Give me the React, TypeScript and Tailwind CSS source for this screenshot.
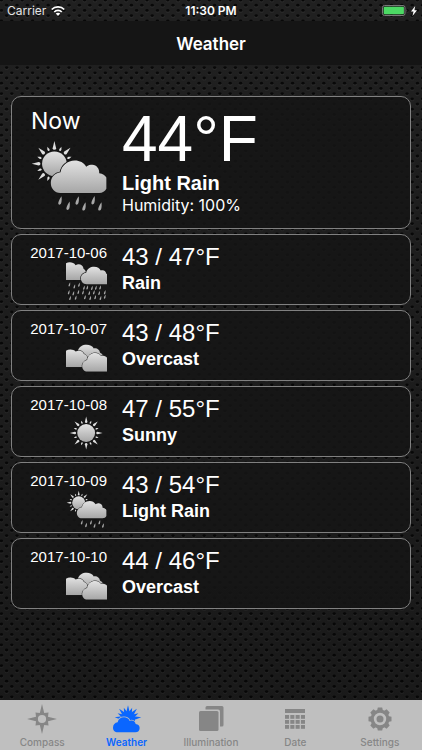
import { useId } from "react";
import type { ReactNode } from "react";

function MeshBackground() {
  const dots: ReactNode[] = [];
  for (let row = 0; row <= 10; row++) {
    for (let col = 0; col <= 5; col++) {
      const x = 1.4 + (col - (row % 2 ? 1 : 0)) * 10.4 + (row % 2 ? 5.2 : 0);
      const y = row * 5.2;
      dots.push(
        <g key={`${row}-${col}`}>
          <ellipse cx={x} cy={y + 1} rx="2" ry="1.5" fill="#292929" />
          <ellipse cx={x} cy={y} rx="1.7" ry="1.4" fill="#080808" />
        </g>
      );
    }
  }
  return (
    <svg className="absolute inset-0 h-full w-full" aria-hidden="true">
      <defs>
        <pattern id="mesh" width="52" height="52" patternUnits="userSpaceOnUse">
          <rect width="52" height="52" fill="#202020" />
          {dots}
        </pattern>
        <linearGradient id="shade" x1="0" y1="0" x2="0" y2="1">
          <stop offset="0" stopColor="#000" stopOpacity="0" />
          <stop offset="1" stopColor="#000" stopOpacity="0.22" />
        </linearGradient>
      </defs>
      <rect width="100%" height="100%" fill="url(#mesh)" />
      <rect width="100%" height="100%" fill="url(#shade)" />
    </svg>
  );
}

function Silver({ id }: { id: string }) {
  return (
    <linearGradient id={id} x1="0" y1="0" x2="0" y2="1">
      <stop offset="0" stopColor="#e2e2e2" />
      <stop offset="1" stopColor="#a6a6a6" />
    </linearGradient>
  );
}

function Sun({ cx, cy, r, fill }: { cx: number; cy: number; r: number; fill: string }) {
  const rays = Array.from({ length: 16 }, (_, i) => {
    const tip = i % 2 ? r * 1.5 : r * 1.84;
    const half = i % 2 ? r * 0.09 : r * 0.14;
    const base = r * 1.13;
    const mid = r * 1.27;
    return (
      <path
        key={i}
        transform={`translate(${cx} ${cy}) rotate(${i * 22.5})`}
        d={`M0 ${-tip} L${half} ${-mid} Q${half} ${-base} 0 ${-base} Q${-half} ${-base} ${-half} ${-mid} Z`}
        fill="#dedede"
      />
    );
  });
  return (
    <g>
      {rays}
      <circle cx={cx} cy={cy} r={r} fill={fill} />
    </g>
  );
}

function Drops({ points, size }: { points: number[][]; size: number }) {
  return (
    <>
      {points.map(([x, y]) => (
        <path
          key={`${x}-${y}`}
          transform={`translate(${x} ${y}) scale(${size})`}
          d="M5 -13 C6 -3 6 12 -1 13 C-8 13 -6 3 5 -13 Z"
          fill="#a8a8a8"
        />
      ))}
    </>
  );
}

type Kind = "lightRain" | "rain" | "overcast" | "sunny";

function WeatherIcon({ kind, className }: { kind: Kind; className: string }) {
  const id = useId();
  const fill = `url(#${id})`;
  if (kind === "lightRain") {
    return (
      <svg viewBox="60 148 234 220" className={className} aria-hidden="true">
        <defs><Silver id={id} /></defs>
        <Sun cx={132} cy={222} r={38} fill={fill} />
        <path
          d="M150 312 C133 312 121 298 121 281 C121 264 133 250 151 248 C154 228 172 212 195 212 C210 212 223 219 230 231 C236 226 243 225 249 225 C262 226 271 237 270 251 C281 252 288 257 292 264 V299 C288 307 280 312 270 312 Z"
          fill={fill}
          stroke="#161616"
          strokeWidth="5"
          paintOrder="stroke"
        />
        <Drops size={1} points={[[149, 335], [174, 351], [202, 335], [223, 353], [251, 334], [272, 353]]} />
      </svg>
    );
  }
  if (kind === "rain") {
    return (
      <svg viewBox="168 93 124 114" className={className} aria-hidden="true">
        <defs><Silver id={id} /></defs>
        <path d="M168 96 C178 91 191 93 197 102 C208 96 220 102 221 113 C231 118 231 133 226 147 H168 Z" fill={fill} />
        <path
          d="M230 160 C220 160 213 152 213 142 C213 133 220 126 229 125 C232 113 242 107 253 107 C263 107 270 112 273 118 C282 115 289 120 290 128 L292 129 V160 Z"
          fill={fill}
          stroke="#161616"
          strokeWidth="4"
          paintOrder="stroke"
        />
        <Drops
          size={0.5}
          points={[
            [178, 160], [193, 166], [207, 161], [176, 184], [190, 187], [205, 183], [180, 201], [197, 200],
            [222, 170], [232, 169], [246, 171], [258, 170], [271, 169], [285, 184], [219, 184], [225, 199],
            [238, 186], [252, 184], [268, 186], [241, 201], [256, 199], [272, 201], [285, 197],
          ]}
        />
      </svg>
    );
  }
  if (kind === "overcast") {
    return (
      <svg viewBox="168 324 124 114" className={className} aria-hidden="true">
        <defs><Silver id={id} /></defs>
        <g stroke="#222" strokeWidth="3" paintOrder="stroke">
          <path d="M204 362 C208 350 218 344 230 344 C240 344 248 348 252 355 C261 353 269 358 271 368 C279 371 282 380 279 388 H210 Z" fill={fill} />
          <path d="M168 362 C177 356 190 357 197 364 C208 359 220 363 222 372 C233 375 237 388 232 411 H168 Z" fill={fill} />
          <path d="M233 425 C223 425 217 417 217 408 C217 399 223 392 232 390 C233 377 245 369 256 369 C264 369 270 372 274 378 C282 375 290 379 292 383 V425 Z" fill={fill} />
        </g>
      </svg>
    );
  }
  return (
    <svg viewBox="168 102 124 114" className={className} aria-hidden="true">
      <defs><Silver id={id} /></defs>
      <Sun cx={229} cy={159} r={27} fill={fill} />
    </svg>
  );
}

const days: { date: string; temp: string; label: string; kind: Kind }[] = [
  { date: "2017-10-06", temp: "43 / 47°F", label: "Rain", kind: "rain" },
  { date: "2017-10-07", temp: "43 / 48°F", label: "Overcast", kind: "overcast" },
  { date: "2017-10-08", temp: "47 / 55°F", label: "Sunny", kind: "sunny" },
  { date: "2017-10-09", temp: "43 / 54°F", label: "Light Rain", kind: "lightRain" },
  { date: "2017-10-10", temp: "44 / 46°F", label: "Overcast", kind: "overcast" },
];

function CompassIcon() {
  return (
    <svg viewBox="0 0 30 30" className="h-[30px] w-[30px]" fill="currentColor" aria-hidden="true">
      <path
        fillRule="evenodd"
        d="M15 0 L17.2 9 L21.5 8.5 L21 12.8 L30 15 L21 17.2 L21.5 21.5 L17.2 21 L15 30 L12.8 21 L8.5 21.5 L9 17.2 L0 15 L9 12.8 L8.5 8.5 L12.8 9 Z M15 10.9 A4.1 4.1 0 1 0 15 19.1 A4.1 4.1 0 1 0 15 10.9 Z"
      />
    </svg>
  );
}

function CloudSunIcon() {
  return (
    <svg viewBox="0 0 90 90" className="h-[30px] w-[30px]" fill="currentColor" aria-hidden="true">
      {[-84, -63, -42, -21, 0, 21, 42, 63, 84].map((a, i) => (
        <path key={a} transform={`translate(48 44) rotate(${a})`} d={i % 2 ? "M0 -35 L4 -22 V-18 H-4 V-22 Z" : "M0 -40 L4 -24 V-18 H-4 V-24 Z"} />
      ))}
      <circle cx="48" cy="44" r="22" />
      <path
        d="M18 85 C8 85 3 78 3 71 C3 62 9 56 17 55 C19 45 27 40 36 40 C44 40 50 44 53 51 C62 47 70 53 71 60 C79 61 83 66 83 72 C83 80 78 85 70 85 Z"
        stroke="#bfbfbf"
        strokeWidth="5"
        paintOrder="stroke"
      />
    </svg>
  );
}

function PagesIcon() {
  return (
    <svg viewBox="0 0 30 30" className="h-[30px] w-[30px]" fill="currentColor" aria-hidden="true">
      <path d="M11 2 H26 Q27.500 2 27.500 3.500 V21 Q27.500 22.500 26 22.500 H24 V7.500 Q24 5.500 22 5.500 H9.500 V3.500 Q9.500 2 11 2 Z" />
      <rect x="3" y="7" width="19.500" height="20" rx="1.500" />
    </svg>
  );
}

function CalendarIcon() {
  return (
    <svg viewBox="0 0 30 30" className="h-[30px] w-[30px]" fill="currentColor" aria-hidden="true">
      <rect x="5" y="5" width="20" height="4" />
      {[0, 1, 2, 3].map((c) =>
        [0, 1, 2].map((r) => <rect key={`${c}-${r}`} x={5 + c * 5.3} y={11 + r * 5} width="4.100" height="3.800" />)
      )}
    </svg>
  );
}

function GearIcon() {
  return (
    <svg viewBox="0 0 30 30" className="h-[30px] w-[30px]" fill="currentColor" aria-hidden="true">
      {[0, 45, 90, 135, 180, 225, 270, 315].map((a) => (
        <path key={a} transform={`rotate(${a} 15 15)`} d="M12 7 L12.800 3.500 H17.200 L18 7 Z" />
      ))}
      <circle cx="15" cy="15" r="7.800" fill="none" stroke="currentColor" strokeWidth="3.200" />
      <circle cx="15" cy="15" r="3.500" />
    </svg>
  );
}

const tabs = [
  { label: "Compass", icon: <CompassIcon /> },
  { label: "Weather", icon: <CloudSunIcon />, active: true },
  { label: "Illumination", icon: <PagesIcon /> },
  { label: "Date", icon: <CalendarIcon /> },
  { label: "Settings", icon: <GearIcon /> },
];

const card = "flex gap-[15px] rounded-[10px] border border-[#808080] bg-[#151515]/85 pl-[19px]";

export default function App() {
  return (
    <div className="relative min-h-screen bg-[#1f1f1f] font-['Liberation_Sans',Arial,sans-serif] text-white">
      <MeshBackground />
      <div className="relative flex min-h-screen flex-col">
        <div className="grid h-[21px] grid-cols-3 items-center px-[7px] font-['Inter',sans-serif] text-xs">
          <div className="flex items-center gap-[5px] text-[#e4e4e4]">
            <span>Carrier</span>
            <svg viewBox="0 0 28 20" className="h-[10px] w-[14px]" fill="none" stroke="#fff" strokeWidth="3.400" aria-hidden="true">
              <path d="M1.500 7 C8 0 20 0 26.500 7" />
              <path d="M6.500 12 C10.500 7.500 17.500 7.500 21.500 12" />
              <path d="M14 20 L9.500 15.200 C12 13 16 13 18.500 15.200 Z" fill="#fff" stroke="none" />
            </svg>
          </div>
          <div className="text-center font-semibold">11:30 PM</div>
          <div className="flex items-center justify-end gap-[3px]">
            <svg viewBox="0 0 26 11" className="h-[11px] w-[26px]" aria-hidden="true">
              <rect x="0.500" y="0.500" width="22.500" height="10" rx="2" fill="none" stroke="#777" />
              <rect x="1.700" y="1.700" width="20.200" height="7.600" rx="1" fill="#4cd964" />
              <path d="M24.500 4 Q26 5.500 24.500 7 Z" fill="#777" />
            </svg>
            <svg viewBox="0 0 6 10" className="-mr-[2px] h-[10px] w-[6px]" fill="#fff" aria-hidden="true">
              <path d="M4.200 0 L0 5.600 H2.500 L1.500 10 L6 4.200 H3.400 Z" />
            </svg>
          </div>
        </div>
        <header className="flex h-11 items-center justify-center bg-[#151515] pt-[3px]">
          <h1 className="font-['Inter',sans-serif] text-[17px] font-semibold">Weather</h1>
        </header>

        <main className="flex flex-1 flex-col gap-[5px] px-[11px] pt-[31px]">
          <section className={`${card} h-[133px]`}>
            <div className="w-[76px] pt-[9px]">
              <h2 className="font-['Inter',sans-serif] text-[23px] leading-[30px]">Now</h2>
              <WeatherIcon kind="lightRain" className="mt-[3px] h-[73px] w-[76px]" />
            </div>
            <div className="pt-[9px]">
              <p className="text-[64px] leading-[66px]">44°F</p>
              <p className="text-xl leading-[22px] font-bold">Light Rain</p>
              <p className="font-['Inter',sans-serif] text-base leading-[22px]">Humidity: 100%</p>
            </div>
          </section>
          {days.map((d) => (
            <section key={d.date} className={`${card} h-[71px]`}>
              <div className="flex w-[76px] flex-col items-end pt-[9px]">
                <h2 className="text-[15px] leading-[18px] whitespace-nowrap">{d.date}</h2>
                <WeatherIcon kind={d.kind} className="h-[38px] w-[41px]" />
              </div>
              <div className="pt-[8px]">
                <p className="text-2xl leading-[28px]">{d.temp}</p>
                <p className="text-lg leading-[24px] font-bold">{d.label}</p>
              </div>
            </section>
          ))}
        </main>

        <nav className="grid h-[50px] grid-cols-5 bg-[#bfbfbf] font-['Inter',sans-serif]">
          {tabs.map((t) => (
            <button
              key={t.label}
              type="button"
              className={`flex flex-col items-center pt-[4px] text-[10px] leading-[16px] ${t.active ? "font-semibold text-[#0a66ff]" : "font-medium text-[#868686]"}`}
            >
              {t.icon}
              <span>{t.label}</span>
            </button>
          ))}
        </nav>
      </div>
    </div>
  );
}
